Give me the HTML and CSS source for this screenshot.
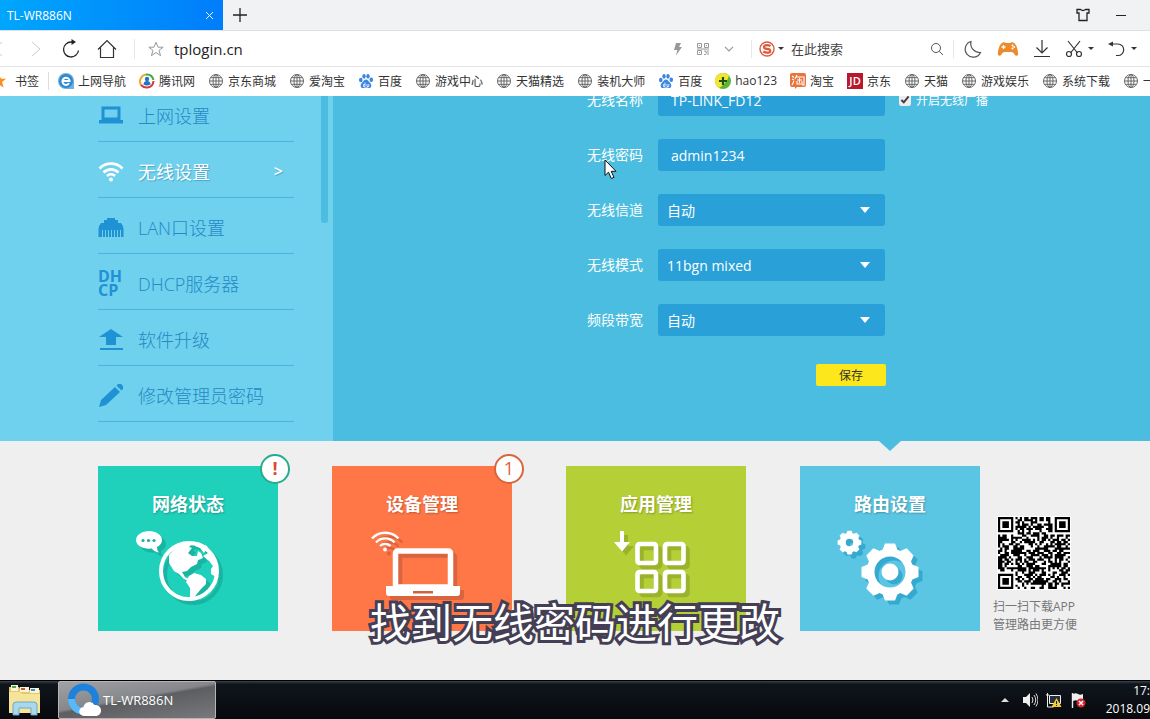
FILE: index.html
```html
<!DOCTYPE html>
<html lang="zh-CN">
<head>
    <meta charset="UTF-8">
    <meta name="viewport" content="width=device-width, initial-scale=1.0">
    <title>TL-WR886N</title>
    <link rel="stylesheet" href="styles.css">
</head>
<body>
    <svg class="sprite" aria-hidden="true">
        <symbol id="globe" viewBox="0 0 16 16">
            <g fill="none" stroke="#666" stroke-width="1">
                <circle cx="8" cy="8" r="6.5"/>
                <ellipse cx="8" cy="8" rx="3" ry="6.5"/>
                <path d="M8 1.5v13M1.5 8h13M2.5 4.7h11M2.5 11.3h11"/>
            </g>
        </symbol>
        <symbol id="paw" viewBox="0 0 16 16">
            <g fill="#3b86e0">
                <ellipse cx="2.8" cy="7" rx="1.8" ry="2.3"/>
                <ellipse cx="6" cy="3.3" rx="1.7" ry="2.4"/>
                <ellipse cx="10" cy="3.3" rx="1.7" ry="2.4"/>
                <ellipse cx="13.3" cy="6.8" rx="1.8" ry="2.3"/>
                <path d="M8 6.5c2 0 2.600 2 4 3.200 1.800 1.500 2 5.300-1 5.300-1.500 0-2-.4-3-.4s-1.500.4-3 .4c-3 0-2.800-3.800-1-5.300C5.400 8.500 6 6.500 8 6.500z"/>
            </g>
            <path d="M7 9.500v4M7 11.500h-1.500v2H7M9 11v2.500h1.800V11" fill="none" stroke="#fff" stroke-width=".8"/>
        </symbol>
        <symbol id="gear" viewBox="-30 -30 60 60">
            <circle r="19.500" fill="none" stroke="#fff" stroke-width="8"/>
            <g id="teeth" fill="#fff">
                <path id="tooth" d="M-8-21L-5-28.500H5L8-21z"/>
                <use href="#tooth" transform="rotate(45)"/>
                <use href="#tooth" transform="rotate(90)"/>
                <use href="#tooth" transform="rotate(135)"/>
                <use href="#tooth" transform="rotate(180)"/>
                <use href="#tooth" transform="rotate(225)"/>
                <use href="#tooth" transform="rotate(270)"/>
                <use href="#tooth" transform="rotate(315)"/>
            </g>
        </symbol>
    </svg>

    <header>
        <div class="tabStrip">
            <div class="tab">
                <span>TL-WR886N</span>
                <button class="iconButton" aria-label="关闭标签">
                    <svg width="9" height="9" viewBox="0 0 9 9"><path d="M1 1l7 7M8 1L1 8" stroke="#fff" fill="none"/></svg>
                </button>
            </div>
            <button class="iconButton newTab" aria-label="新标签">
                <svg width="14" height="14" viewBox="0 0 14 14"><path d="M7 0v14M0 7h14" stroke="#222" stroke-width="1.300"/></svg>
            </button>
            <div class="windowButtons">
                <button class="iconButton" aria-label="皮肤">
                    <svg width="14" height="14" viewBox="0 0 14 14"><path d="M1 1.500h3.500q2.500 2 5 0H13V5h-2v7.500H3V5H1z" fill="none" stroke="#222" stroke-width="1.300"/></svg>
                </button>
                <button class="iconButton" aria-label="最小化">
                    <svg width="12" height="14" viewBox="0 0 12 14"><path d="M1 7.500h10" stroke="#222"/></svg>
                </button>
            </div>
        </div>

        <div class="toolbar">
            <div class="navButtons">
                <button class="iconButton" aria-label="后退">
                    <svg width="10" height="18" viewBox="0 0 10 18"><path d="M9 2L1 9l8 7" fill="none" stroke="#ccc"/></svg>
                </button>
                <button class="iconButton" aria-label="前进">
                    <svg width="10" height="18" viewBox="0 0 10 18"><path d="M1 2l8 7-8 7" fill="none" stroke="#ccc"/></svg>
                </button>
                <button class="iconButton" aria-label="刷新">
                    <svg width="20" height="20" viewBox="0 0 20 20"><path d="M10 3a7.500 7.500 0 1 0 7.500 8.500M10 3h2" fill="none" stroke="#222" stroke-width="1.300"/><path d="M10.500 0l4.500 3-4.500 3z" fill="#222"/></svg>
                </button>
                <button class="iconButton" aria-label="主页">
                    <svg width="20" height="20" viewBox="0 0 20 20"><path d="M1 10.500L10 1.500l9 9M3.500 8.500v10h13v-10" fill="none" stroke="#333" stroke-width="1.200"/></svg>
                </button>
            </div>
            <div class="address">
                <svg width="16" height="16" viewBox="0 0 16 16"><path d="M8 1.200l2 5h5.200l-4.200 3.200 1.600 5.300L8 11.500l-4.600 3.200L5 9.400.8 6.200H6z" fill="none" stroke="#999"/></svg>
                <input type="text" class="addressInput" value="tplogin.cn" aria-label="地址">
                <svg width="8" height="14" viewBox="0 0 8 14"><path d="M2 1h5L5 5h3L2 13.500 3.300 8H0z" fill="#999"/></svg>
                <svg width="12" height="12" viewBox="0 0 12 12"><path d="M.5.500h4v4h-4zM7.500.500h4v4h-4zM.5 7.500h4v4h-4zM0 6h12M2 2.500h1M9 2.500h1M2 9.500h1M7 8h2v2h3M7 11.500h2M11 7v2M11 11v1" fill="none" stroke="#999"/></svg>
                <svg width="10" height="6" viewBox="0 0 10 6"><path d="M1 .8l4 4 4-4" fill="none" stroke="#999" stroke-width="1.200"/></svg>
            </div>
            <div class="search">
                <svg width="16" height="16" viewBox="0 0 16 16"><circle cx="8" cy="8" r="7" fill="none" stroke="#de5a3c" stroke-width="1.400"/><path d="M11.500 5.200Q10 4.200 8 4.200q-3 0-3 1.800T8 7.800t3.300 2T8 11.700q-2 0-3.700-1.200" fill="none" stroke="#de5a3c" stroke-width="2.200"/></svg>
                <span class="caret"></span>
                <input type="text" class="searchInput" placeholder="在此搜索" aria-label="在此搜索">
                <svg width="14" height="14" viewBox="0 0 14 14"><circle cx="6" cy="6" r="4.500" fill="none" stroke="#555"/><path d="M9.300 9.300L13 13" stroke="#555"/></svg>
            </div>
            <div class="tools">
                <svg width="20" height="20" viewBox="0 0 20 20"><path d="M8 2.500a8 8 0 1 0 9.500 11A9 9 0 0 1 8 2.500z" fill="none" stroke="#555" stroke-width="1.200"/></svg>
                <svg width="22" height="16" viewBox="0 0 22 16"><path d="M6 1.500C7.500 1 8 2 9 2h4c1 0 1.500-1 3-.5 3.500.5 5.500 9 5 12-.5 2-2.500 1.500-3.500 0-1-1.800-2-2.500-3.500-2.500H8c-1.500 0-2.500.7-3.500 2.500-1 1.500-3 2-3.500 0C.5 10.500 2.500 2 6 1.500z" fill="#ec8b2c"/><path d="M6.500 4v4M4.500 6h4" stroke="#fff" stroke-width="1.300"/><circle cx="15.500" cy="4.500" r="1" fill="#fff"/><circle cx="15.500" cy="7.500" r="1" fill="#fff"/><circle cx="17.200" cy="6" r="1" fill="#fff"/></svg>
                <svg width="18" height="18" viewBox="0 0 18 18"><path d="M9 0v13M3.500 7.500L9 13l5.500-5.500M1 16.500h16" fill="none" stroke="#333" stroke-width="1.200"/></svg>
                <div class="toolPair">
                    <svg width="18" height="18" viewBox="0 0 18 18"><path d="M3 1l9.500 12M15 1L5.500 13" fill="none" stroke="#333" stroke-width="1.200"/><circle cx="4" cy="14" r="2.500" fill="none" stroke="#333" stroke-width="1.200"/><circle cx="14" cy="14" r="2.500" fill="none" stroke="#333" stroke-width="1.200"/></svg>
                    <span class="caret"></span>
                </div>
                <div class="toolPair">
                    <svg width="18" height="18" viewBox="0 0 18 18"><path d="M2 4h8a5.500 5.500 0 0 1 0 11.500H8" fill="none" stroke="#333" stroke-width="1.200"/><path d="M0 4l5-2.500v5z" fill="#333"/></svg>
                    <span class="caret"></span>
                </div>
            </div>
        </div>

        <nav class="bookmarks">
            <a href="#" class="bookmark starred"><svg class="icon" viewBox="0 0 16 16"><path d="M7 1l2 4.800h5L10 9l1.700 5.500L7 11.500l-4.700 3L4 9 0 5.800h5z" fill="#ff8a1e"/></svg>书签</a>
            <a href="#" class="bookmark"><svg class="icon" viewBox="0 0 16 16"><path d="M8 0a8 8 0 0 1 8 8v8H8A8 8 0 0 1 8 0z" fill="#6fb1e0"/><circle cx="8" cy="8" r="7" fill="#2f8ad0"/><path d="M11 10.300A3.600 3.600 0 1 1 11.600 8H5" fill="none" stroke="#fff" stroke-width="2"/></svg>上网导航</a>
            <a href="#" class="bookmark"><svg class="icon" viewBox="0 0 16 16"><path d="M2 12A7 7 0 0 1 7 1.500" fill="none" stroke="#f2a72c" stroke-width="2"/><path d="M7 1.500Q13 1 14.500 7" fill="none" stroke="#4aa546" stroke-width="2"/><path d="M2 12Q5 15 8.500 14.500 14 14 14.500 8" fill="none" stroke="#d8382e" stroke-width="2"/><circle cx="8" cy="6" r="2.200" fill="#2274c0"/><path d="M4.500 11.500q0-3.500 3.500-3.500t3.500 3.500q-3.500 2-7 0z" fill="#2274c0"/></svg>腾讯网</a>
            <a href="#" class="bookmark"><svg class="icon"><use href="#globe"/></svg>京东商城</a>
            <a href="#" class="bookmark"><svg class="icon"><use href="#globe"/></svg>爱淘宝</a>
            <a href="#" class="bookmark"><svg class="icon"><use href="#paw"/></svg>百度</a>
            <a href="#" class="bookmark"><svg class="icon"><use href="#globe"/></svg>游戏中心</a>
            <a href="#" class="bookmark"><svg class="icon"><use href="#globe"/></svg>天猫精选</a>
            <a href="#" class="bookmark"><svg class="icon"><use href="#globe"/></svg>装机大师</a>
            <a href="#" class="bookmark"><svg class="icon"><use href="#paw"/></svg>百度</a>
            <a href="#" class="bookmark"><svg class="icon" viewBox="0 0 16 16"><circle cx="8" cy="8" r="8" fill="#5cb531"/><path d="M4 1A8 8 0 0 0 4 15 22 22 0 0 0 14 3 8 8 0 0 0 4 1z" fill="#f5e532"/><path d="M8 4v8M4 8h8" stroke="#17521c" stroke-width="2.200"/></svg>hao123</a>
            <a href="#" class="bookmark"><svg class="icon" viewBox="0 0 16 16"><path d="M2 0h12q2 0 2 2v10q0 2-2 2H7l-2 2v-2H2q-2 0-2-2V2q0-2 2-2z" fill="#e8743b"/><path d="M2 3l2 1.500M2 6l2 1M2 12l2-4M7 2L5 6M6 4h8v8h-2M7 7h5M9.500 5v5M7 8v3h5V8" fill="none" stroke="#fff" stroke-width="1.100"/></svg>淘宝</a>
            <a href="#" class="bookmark"><span class="icon jdIcon" aria-hidden="true">JD</span>京东</a>
            <a href="#" class="bookmark"><svg class="icon"><use href="#globe"/></svg>天猫</a>
            <a href="#" class="bookmark"><svg class="icon"><use href="#globe"/></svg>游戏娱乐</a>
            <a href="#" class="bookmark"><svg class="icon"><use href="#globe"/></svg>系统下载</a>
            <a href="#" class="bookmark"><svg class="icon"><use href="#globe"/></svg>一</a>
        </nav>
    </header>

    <main>
        <aside class="sidebar">
            <a href="#" class="menuItem">
                <svg class="menuIcon" viewBox="0 0 26 26"><path d="M5 6h16v11H5z" fill="none" stroke="#1f92d4" stroke-width="3"/><path d="M1 18h24v3.500H1z" fill="#1f92d4"/></svg>
                <span>上网设置</span>
            </a>
            <a href="#" class="menuItem active">
                <svg class="menuIcon" viewBox="0 0 26 26"><g fill="none" stroke="#fff" stroke-width="2.600"><path d="M1.500 10.500a16 16 0 0 1 23 0M5.500 14.500a10.500 10.500 0 0 1 15 0M9 18a5.600 5.600 0 0 1 8 0"/></g><circle cx="13" cy="21.500" r="2" fill="#fff"/></svg>
                <span>无线设置</span>
                <span class="arrow">&gt;</span>
            </a>
            <a href="#" class="menuItem">
                <svg class="menuIcon" viewBox="0 0 26 26"><path d="M9 4h8v2h3v3h3q2 2 2.500 6v8H23v-7h-1v7h-2v-7h-1v7h-2v-7h-1v7h-2v-7h-1v7h-2v-7h-1v7H8v-7H7v7H5v-7H4v7H.500v-8Q1 11 3 9h3V6h3z" fill="#1f92d4"/></svg>
                <span>LAN口设置</span>
            </a>
            <a href="#" class="menuItem">
                <span class="menuIcon dhcpIcon" aria-hidden="true">DH<br>CP</span>
                <span>DHCP服务器</span>
            </a>
            <a href="#" class="menuItem">
                <svg class="menuIcon" viewBox="0 0 26 26"><path d="M13 3l12 8h-7v8H8v-8H1zM2 22h23v2H2z" fill="#1f92d4"/></svg>
                <span>软件升级</span>
            </a>
            <a href="#" class="menuItem">
                <svg class="menuIcon" viewBox="0 0 26 26"><path d="M1 25l2-7L17 5l5 5L8 23zM18.500 3.500L20 2h3l2 2v3l-1.500 1.500z" fill="#1f92d4"/></svg>
                <span>修改管理员密码</span>
            </a>
            <div class="scrollThumb"></div>
        </aside>

        <form class="wifiForm">
            <div class="formRow">
                <label for="ssid">无线名称</label>
                <input type="text" class="field" id="ssid" value="TP-LINK_FD12">
                <div class="broadcast">
                    <input type="checkbox" id="broadcast" checked>
                    <label for="broadcast">开启无线广播</label>
                </div>
            </div>
            <div class="formRow">
                <label for="password">无线密码</label>
                <input type="text" class="field" id="password" value="admin1234">
            </div>
            <div class="formRow">
                <label for="channel">无线信道</label>
                <div class="selectBox"><select class="field" id="channel"><option>自动</option></select></div>
            </div>
            <div class="formRow">
                <label for="mode">无线模式</label>
                <div class="selectBox"><select class="field" id="mode"><option>11bgn mixed</option></select></div>
            </div>
            <div class="formRow">
                <label for="bandwidth">频段带宽</label>
                <div class="selectBox"><select class="field" id="bandwidth"><option>自动</option></select></div>
            </div>
            <button type="button" class="saveButton">保存</button>
        </form>

        <svg class="pointer" width="14" height="21" viewBox="0 0 14 21"><path d="M1 1v15.500l3.500-3.300 2.800 6.300 2.700-1.200-2.800-6H12z" fill="#fff" stroke="#111"/></svg>
    </main>

    <section class="dock">
        <a href="#" class="card status">
            <h2>网络状态</h2>
            <span class="badge alert">!</span>
            <svg class="cardIcon" viewBox="0 0 180 100">
                <path d="M51 13c7 0 13 4 13 9 0 3-2 5.500-5 7 0 2 .5 4 2 5.500-3.500-.5-6-2-7-4-9 1-16-3-16-8.500 0-5 6-9 13-9z" fill="#fff"/>
                <g fill="#1dae9c"><circle cx="45" cy="22.500" r="1.600"/><circle cx="50.500" cy="22.500" r="1.600"/><circle cx="56" cy="22.500" r="1.600"/></g>
                <circle cx="91" cy="53" r="28" fill="none" stroke="#fff" stroke-width="4"/>
                <path d="M71 37l8-9 10-4h7l-5 5 3 1-4 5 4 3 5 0 1-5 3 2 2 5-5 2-1 4-6 3-4 4-5 1 3 5 6 3-1 2-6-3-5-5-5-3-5-8z" fill="#fff"/>
                <path d="M97 28l5 2 4 5 2-3 4 2-3-6-9-4z" fill="#fff"/>
                <path d="M91 58l5-3 7 2 5 4v5l-5 5-5 6-4 6h-2V70l-4-6z" fill="#fff"/>
                <path d="M105 38l5-3 8 8 2 10-2 6-5-3v-5l2-3-4-5z" fill="#fff"/>
            </svg>
        </a>
        <a href="#" class="card devices">
            <h2>设备管理</h2>
            <span class="badge">1</span>
            <svg class="cardIcon" viewBox="0 0 180 100">
                <g fill="none" stroke="#fff" stroke-width="2.400"><path d="M40 20.500a18 18 0 0 1 26.500 0M44 24.500a12.500 12.500 0 0 1 18.500 0M48 28a7.500 7.500 0 0 1 10.500 0"/></g>
                <circle cx="53" cy="31.500" r="2" fill="#fff"/>
                <rect x="63.500" y="33" width="55" height="36" rx="2" fill="none" stroke="#fff" stroke-width="5.500"/>
                <path d="M54 68h74v7q0 3-3 3H57q-3 0-3-3z" fill="#fff"/>
                <path d="M81 73h20v2.500H81z" fill="#cf6340"/>
            </svg>
        </a>
        <a href="#" class="card apps">
            <h2>应用管理</h2>
            <svg class="cardIcon" viewBox="0 0 180 100">
                <path d="M54 13h4v11h6l-8 9.500-8-9.500h6z" fill="#fff"/>
                <g fill="none" stroke="#fff" stroke-width="4.600">
                    <rect x="71.500" y="26" width="18.500" height="19" rx="2"/>
                    <rect x="99" y="26" width="18.500" height="19" rx="2"/>
                    <rect x="71.500" y="54" width="18.500" height="19" rx="2"/>
                    <rect x="99" y="54" width="18.500" height="19" rx="2"/>
                </g>
            </svg>
        </a>
        <a href="#" class="card router">
            <h2>路由设置</h2>
            <svg class="cardIcon" viewBox="0 0 180 100">
                <use href="#gear" x="60" y="24" width="60" height="60"/>
                <circle cx="90" cy="54" r="8.500" fill="#fff"/>
                <use href="#gear" x="37" y="12" width="25" height="25"/>
                <circle cx="49.500" cy="24.500" r="5.500" fill="none" stroke="#fff" stroke-width="3.500"/>
            </svg>
        </a>
        <div class="qrBox">
            <svg id="qr" viewBox="0 0 33 33"></svg>
            <p>扫一扫下载APP<br>管理路由更方便</p>
        </div>
        <p class="caption">找到无线密码进行更改</p>
    </section>

    <footer class="taskbar">
        <button class="iconButton" aria-label="资源管理器">
            <svg width="34" height="32" viewBox="0 0 34 32">
                <path d="M1 3h10l2 3h19v23H1z" fill="#e5c868"/>
                <path d="M3 1h7v6H3zM12 3h9v5h-9zM22 4h9v5h-9z" fill="#f8f4df"/>
                <path d="M4 2h4v2H4z" fill="#53a647"/><path d="M13 4h4v2h-4z" fill="#c9563b"/><path d="M23 5h4v2h-4z" fill="#4d8fc4"/>
                <path d="M1 8h11l2 2h18v19H1z" fill="#f7e49b"/>
                <path d="M5 31V21q0-3 3-3h18q3 0 3 3v10h-6v-7H11v7z" fill="#a9d8ee" stroke="#6aa7c7"/>
            </svg>
        </button>
        <button class="taskButton">
            <svg width="34" height="34" viewBox="0 0 34 34">
                <circle cx="16.500" cy="16" r="12" fill="none" stroke="#1e82dc" stroke-width="7"/>
                <path d="M4.500 16A12 12 0 0 0 16 28" fill="none" stroke="#5bb8f4" stroke-width="7"/>
                <path d="M17 33a4.500 4.500 0 0 1-.5-9 6 6 0 0 1 11-2 5.500 5.500 0 0 1 2 11z" fill="#fff"/>
            </svg>
            TL-WR886N
        </button>
        <div class="tray">
            <svg width="8" height="6" viewBox="0 0 8 6"><path d="M0 5l4-4 4 4z" fill="#ddd"/></svg>
            <svg width="16" height="16" viewBox="0 0 16 16"><path d="M1 5h3l4-4v14l-4-4H1z" fill="#eee"/><path d="M10 5q2 3 0 6M12 3q3.500 5 0 10M14 1.500q4 6.500 0 13" fill="none" stroke="#ddd"/></svg>
            <svg width="16" height="16" viewBox="0 0 16 16"><path d="M3.500 3.500h11v8h-11z" fill="#24303c" stroke="#eee"/><path d="M1.500 1v4M0 3h3M1.500 5v10h6M9 12v2" stroke="#eee" fill="none"/><path d="M10.500 6l5 9h-10z" fill="#f6cb2f"/><path d="M10.500 9v3M10.500 13v1" stroke="#222"/></svg>
            <svg width="16" height="16" viewBox="0 0 16 16"><path d="M2.500 1v15" stroke="#eee" stroke-width="1.400"/><path d="M3 2q3-1.500 5 0t5 0v7q-3 1.500-5 0T3 9z" fill="#eee"/><circle cx="11" cy="11" r="4.500" fill="#d3232a"/><path d="M9 9l4 4M13 9l-4 4" stroke="#fff" stroke-width="1.500"/></svg>
            <div class="clock">17:<br>2018.09</div>
        </div>
    </footer>
    <script src="index.js"></script>
</body>
</html>
```
FILE: styles.css
```css
* {
    box-sizing: border-box;
    margin: 0;
    padding: 0;
}
body {
    display: flex;
    flex-direction: column;
    height: 100vh;
    overflow: hidden;
    background-color: #efefef;
    font-family: 'Open Sans', 'Noto Sans CJK SC', sans-serif;
    font-size: 14px;
}
a {
    color: inherit;
    text-decoration: none;
}
svg {
    display: block;
    flex-shrink: 0;
}
input, select, button {
    font-family: inherit;
    font-size: inherit;
    border: none;
    outline: none;
}
.sprite {
    position: absolute;
    width: 0;
    height: 0;
}
.iconButton {
    background: none;
    cursor: pointer;
}

/* browser window */
.tabStrip {
    display: flex;
    align-items: center;
    height: 30px;
    background-color: #f1f2f4;
}
.tab {
    display: flex;
    align-items: center;
    justify-content: space-between;
    width: 223px;
    height: 30px;
    padding: 0 9px 0 7px;
    background: linear-gradient(90deg, #00a6fc, #007dfb);
    color: white;
    font-size: 12px;
}
.newTab {
    margin-left: 10px;
}
.windowButtons {
    display: flex;
    gap: 25px;
    margin-left: auto;
    padding-right: 23px;
}
.toolbar {
    display: flex;
    align-items: center;
    height: 37px;
    background-color: white;
    border-top: 1px solid #dfe0e2;
    border-bottom: 1px solid #e3e3e3;
}
.navButtons {
    display: flex;
    align-items: center;
    margin-left: -7px;
    padding-right: 17px;
}
.navButtons .iconButton:nth-child(2) {
    margin-left: 28px;
}
.navButtons .iconButton:nth-child(3) {
    margin-left: 20px;
}
.navButtons .iconButton:nth-child(4) {
    margin-left: 16px;
}
.address {
    display: flex;
    flex: 1;
    align-items: center;
    gap: 15px;
    padding: 0 17px 0 13px;
    border-left: 1px solid #e8e8e8;
}
.addressInput {
    flex: 1;
    min-width: 0;
    margin-left: -5px;
    color: #222;
    font-size: 15px;
    background: none;
}
.search {
    display: flex;
    align-items: center;
    width: 203px;
    padding: 0 9px 0 7px;
    border-left: 1px solid #e8e8e8;
    border-right: 1px solid #e8e8e8;
}
.search .caret {
    margin: 0 7px 0 3px;
}
.searchInput {
    flex: 1;
    min-width: 0;
    font-size: 13px;
    background: none;
}
.searchInput::placeholder {
    color: #444;
}
.caret {
    flex-shrink: 0;
    border: 3px solid transparent;
    border-top-color: #333;
    border-bottom-width: 0;
}
.tools {
    display: flex;
    align-items: center;
    gap: 14px;
    padding: 0 13px 0 9px;
}
.toolPair {
    display: flex;
    align-items: center;
    gap: 5px;
}
.bookmarks {
    display: flex;
    align-items: center;
    gap: 13px;
    height: 29px;
    padding-bottom: 2px;
    overflow: hidden;
    background-color: white;
    color: #333;
    font-size: 12px;
    white-space: nowrap;
}
.bookmark {
    display: flex;
    flex-shrink: 0;
    align-items: center;
    gap: 4px;
}
.starred {
    gap: 7px;
    margin: 0 -4px 0 -8px;
    padding-right: 9px;
    border-right: 1px solid #ddd;
}
.icon {
    width: 16px;
    height: 16px;
}
.jdIcon {
    background-color: #b8182c;
    color: white;
    font-size: 11px;
    font-weight: 600;
    line-height: 16px;
    text-align: center;
}

/* router page */
main {
    position: relative;
    display: flex;
    flex: 1;
    min-height: 0;
    overflow: hidden;
    background-color: #4bbde0;
    color: white;
}
.sidebar {
    position: relative;
    display: flex;
    flex-direction: column;
    justify-content: flex-end;
    width: 333px;
    padding: 0 39px 19px 98px;
    background-color: #6fd1ee;
}
.menuItem {
    display: flex;
    flex-shrink: 0;
    align-items: center;
    gap: 14px;
    height: 56px;
    padding-top: 3px;
    border-bottom: 1px solid #4db3dc;
    color: #2489c4;
    font-size: 18px;
    font-weight: 300;
}
.menuItem.active {
    color: white;
    font-weight: 400;
    text-shadow: 1px 1px 1px #4aa5c6;
}
.menuIcon {
    width: 26px;
    height: 26px;
}
.dhcpIcon {
    height: 28px;
    color: #1f92d4;
    font-size: 16px;
    font-weight: 700;
    line-height: 14px;
}
.arrow {
    margin-left: auto;
    padding-right: 11px;
    font-size: 16px;
    font-weight: 600;
}
.scrollThumb {
    position: absolute;
    top: 0;
    right: 5px;
    width: 7px;
    height: 127px;
    border-radius: 0 0 3px 3px;
    background-color: #4bbde0;
}
.wifiForm {
    display: flex;
    flex: 1;
    flex-direction: column;
    justify-content: flex-end;
    gap: 23px;
    padding: 0 0 55px 254px;
}
.formRow {
    display: flex;
    flex-shrink: 0;
    align-items: center;
    gap: 14px;
    height: 32px;
}
.formRow > label {
    width: 57px;
    padding-bottom: 3px;
}
.field {
    width: 227px;
    height: 32px;
    padding: 0 13px;
    border-radius: 3px;
    background-color: #29a0d8;
    color: white;
}
.selectBox {
    position: relative;
}
.selectBox .field {
    appearance: none;
    padding: 0 9px;
}
.selectBox::after {
    content: '';
    position: absolute;
    top: 13px;
    right: 15px;
    border: 5px solid transparent;
    border-top: 6px solid white;
    border-bottom-width: 0;
    pointer-events: none;
}
.broadcast {
    display: flex;
    align-items: center;
    gap: 5px;
    font-size: 12px;
}
.broadcast input {
    width: 12px;
    height: 12px;
    accent-color: #eee;
}
.saveButton {
    flex-shrink: 0;
    width: 70px;
    height: 22px;
    margin: 5px 0 0 229px;
    border-radius: 2px;
    background-color: #fce71c;
    color: #333;
    font-size: 12px;
    cursor: pointer;
}
.pointer {
    position: absolute;
    top: 63px;
    left: 604px;
}
.dock {
    position: relative;
    display: flex;
    gap: 54px;
    height: 239px;
    padding: 25px 0 0 98px;
}
.card {
    position: relative;
    width: 180px;
    height: 165px;
    padding-top: 24px;
    color: white;
    text-align: center;
}
.card h2 {
    font-size: 18px;
    line-height: 28px;
    text-shadow: 1px 1px 2px #00000040;
}
.cardIcon {
    width: 180px;
    height: 100px;
}
.status {
    background-color: #1fd0ba;
}
.status .cardIcon {
    filter: drop-shadow(4px 4px 0 #19b5a2);
}
.devices {
    background-color: #ff7647;
}
.devices .cardIcon {
    filter: drop-shadow(4px 4px 0 #d9643d);
}
.apps {
    background-color: #b5cf36;
}
.apps .cardIcon {
    filter: drop-shadow(4px 4px 0 #9bb32c);
}
.router {
    background-color: #5bc6e3;
}
.router .cardIcon {
    filter: drop-shadow(4px 4px 0 #36a9d0);
}
.router::before {
    content: '';
    position: absolute;
    top: -25px;
    left: 79px;
    border: 11px solid transparent;
    border-top: 10px solid #4bbde0;
    border-bottom-width: 0;
}
.badge {
    position: absolute;
    top: -12px;
    right: -12px;
    width: 30px;
    height: 30px;
    border: 2px solid #d9643d;
    border-radius: 50%;
    background-color: white;
    color: #d9643d;
    font-size: 18px;
    line-height: 25px;
}
.badge.alert {
    border-color: #27ac8e;
    color: #dd4a32;
    font-weight: 700;
}
.qrBox {
    margin-left: -41px;
    padding-top: 50px;
    color: #777;
    font-size: 12px;
    line-height: 18px;
}
#qr {
    width: 74px;
    height: 74px;
    margin: 0 0 8px 4px;
    border: 1px solid white;
    background-color: white;
}
.caption {
    position: absolute;
    right: 0;
    bottom: 28px;
    left: 0;
    color: white;
    font-size: 41px;
    line-height: 60px;
    text-align: center;
    -webkit-text-stroke: 6px #443f55;
    paint-order: stroke fill;
}

/* windows taskbar */
.taskbar {
    display: flex;
    align-items: center;
    gap: 16px;
    height: 39px;
    padding-left: 8px;
    border-top: 1px solid #000;
    background: linear-gradient(#3a424c, #10151c 3px, #06090d);
    color: white;
}
.taskButton {
    display: flex;
    align-items: center;
    gap: 2px;
    width: 158px;
    height: 38px;
    padding-left: 8px;
    border: 1px solid #b5b5b5;
    border-radius: 2px;
    background: linear-gradient(170deg, #a0a2a5, #85878a 45%, #5c5e61 50%, #77797c);
    color: white;
    font-size: 13px;
}
.tray {
    display: flex;
    align-items: center;
    gap: 8px;
    margin-left: auto;
}
.tray svg:first-child {
    margin-right: 5px;
}
.clock {
    margin-left: 12px;
    font-size: 12px;
    line-height: 18px;
    text-align: right;
}
```
FILE: index.js
```javascript
const SIZE = 33;
const qr = document.getElementById('qr');
let seed = 886;

function nextBit() {
    seed = (seed * 1103515245 + 12345) % 2147483648;
    return seed / 2147483648 < 0.58;
}

// ring, gap and solid centre of the three corner markers
function finderBit(x, y) {
    const d = Math.max(Math.abs(x - 3), Math.abs(y - 3));
    return d === 3 || d <= 1;
}

let path = '';
for (let y = 0; y < SIZE; y++) {
    for (let x = 0; x < SIZE; x++) {
        const right = x > SIZE - 9;
        const low = y > SIZE - 9;
        let on = nextBit();
        if ((x < 8 || right) && (y < 8 || low) && !(right && low)) {
            on = finderBit(right ? x - SIZE + 7 : x, low ? y - SIZE + 7 : y);
        }
        if (on) {
            path += `M${x} ${y}h1v1h-1z`;
        }
    }
}
qr.innerHTML = `<path d="${path}" fill="#000"/>`;
```
